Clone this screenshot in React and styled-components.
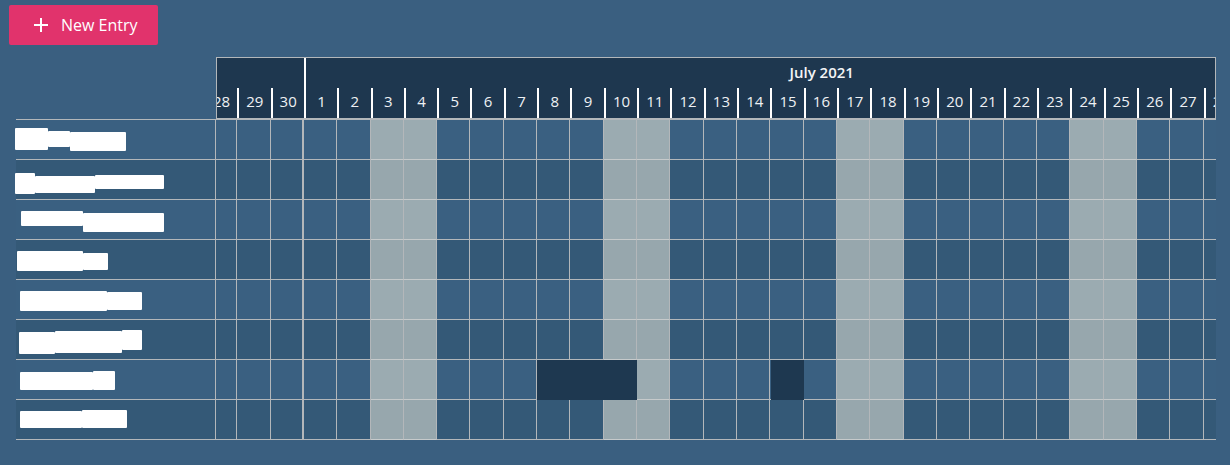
import React, { useLayoutEffect, useRef } from "react";
import styled, { createGlobalStyle } from "styled-components";

const COL = 1000 / 30;
const LINE = "#b3b7ba";
const LINE_LIGHT = "#c6cacb";

const GlobalStyle = createGlobalStyle`
  html, body { margin: 0; padding: 0; background: #3a5f80; }
  body { font-family: "Open Sans", "Noto Sans", sans-serif; color: #fff; }
`;

const Page = styled.div`
  width: 1230px;
  height: 465px;
  background: #3a5f80;
  padding: 5px 0 0 9px;
  box-sizing: border-box;
  overflow: hidden;
`;

const NewButton = styled.button`
  display: flex;
  align-items: center;
  gap: 12px;
  width: 149px;
  height: 40px;
  padding: 0 0 0 24px;
  box-sizing: border-box;
  border: none;
  border-radius: 2px;
  background: #e1336c;
  color: #fff;
  font-family: "Open Sans", sans-serif;
  font-size: 16px;
  cursor: pointer;
`;

const Timeline = styled.div`
  display: flex;
  margin: 12px 0 0 7px;
`;

const LabelCol = styled.div`
  width: 200px;
  display: flex;
  flex-direction: column;
`;

const LabelHeader = styled.div`
  height: 63px;
  box-sizing: border-box;
  border-bottom: 1px solid ${LINE};
`;

const LabelRow = styled.div`
  height: 40px;
  box-sizing: border-box;
  border-bottom: 1px solid ${LINE};
  border-right: 1px solid ${LINE};
  background: ${(p) => (p.$alt ? "#345977" : "#3a6081")};
  display: flex;
  align-items: flex-start;
  padding-top: ${(p) => p.$top}px;
  padding-left: ${(p) => p.$left}px;
`;

const Blob = styled.span`
  display: block;
  background: #fff;
  width: ${(p) => p.$w}px;
  height: ${(p) => p.$h}px;
  margin-top: ${(p) => p.$t}px;
  margin-left: ${(p) => p.$ml || 0}px;
  border-radius: 1px;
`;

const GridCol = styled.div`
  width: 1000px;
  display: flex;
  flex-direction: column;
`;

const HeaderFrame = styled.div`
  width: 1000px;
  height: 63px;
  box-sizing: border-box;
  background: #1e374f;
  border-top: 1px solid ${LINE};
  border-left: 1px solid ${LINE};
  border-right: 1px solid ${LINE};
  border-bottom: 2px solid ${LINE};
`;

const Viewport = styled.div`
  overflow: hidden;
  width: 100%;
`;

const Track = styled.div`
  display: flex;
  flex-direction: column;
  width: max-content;
`;

const MonthRow = styled.div`
  display: flex;
  height: 30px;
`;

const MonthCell = styled.div`
  flex: 0 0 auto;
  box-sizing: border-box;
  border-left: 2px solid #fff;
  display: flex;
  align-items: center;
  justify-content: center;
  padding-bottom: 2px;
  font-size: 15px;
  font-weight: 600;
  color: #f2f4f6;
`;

const DayRow = styled.div`
  display: flex;
  height: 30px;
`;

const DayCell = styled.div`
  flex: 0 0 ${COL}px;
  width: ${COL}px;
  box-sizing: border-box;
  border-left: 2px solid #fff;
  display: flex;
  align-items: center;
  justify-content: center;
  padding-bottom: 5px;
  font-size: 15px;
  color: #eef1f4;
`;

const Row = styled.div`
  position: relative;
  display: flex;
  height: 40px;
  background: ${(p) => (p.$alt ? "#345977" : "#3a6081")};
`;

const Cell = styled.div`
  flex: 0 0 ${COL}px;
  width: ${COL}px;
  box-sizing: border-box;
  border-right: ${(p) => (p.$monthEnd ? 2 : 1)}px solid ${LINE};
  border-bottom: 1px solid ${(p) => (p.$weekend ? LINE_LIGHT : LINE)};
  background: ${(p) =>
    p.$weekend ? (p.$alt ? "#97a7ad" : "#9babb1") : "transparent"};
`;

const EventBar = styled.div`
  position: absolute;
  top: 0;
  height: 40px;
  background: #1e3850;
  z-index: 1;
`;

const PlusIcon = () => (
  <svg width="16" height="16" viewBox="0 0 16 16" aria-hidden="true">
    <path d="M8 1v14M1 8h14" stroke="#fff" strokeWidth="2" fill="none" />
  </svg>
);

const days = [];
for (let d = 1; d <= 30; d++) days.push({ m: 5, d });
for (let d = 1; d <= 31; d++) days.push({ m: 6, d });
days.forEach((x) => {
  const dow = new Date(2021, x.m, x.d).getDay();
  x.weekend = dow === 0 || dow === 6;
  x.monthEnd = x.m === 5 && x.d === 30;
});

const months = [
  { label: "June 2021", count: 30 },
  { label: "July 2021", count: 31 },
];

const idxOf = (m, d) => days.findIndex((x) => x.m === m && x.d === d);

const labels = [
  { top: 8, left: 0, parts: [[-1, 33, 22, 0], [0, 22, 16, 3], [0, 56, 19, 4]] },
  { top: 13, left: 0, parts: [[-1, 20, 21, 0], [0, 60, 17, 3], [0, 69, 14, 2]] },
  { top: 11, left: 5, parts: [[0, 62, 15, 0], [0, 81, 19, 2]] },
  { top: 11, left: 1, parts: [[0, 66, 20, 0], [0, 25, 17, 2]] },
  { top: 11, left: 4, parts: [[0, 87, 20, 0], [0, 35, 18, 1]] },
  { top: 10, left: 3, parts: [[0, 36, 22, 2], [0, 67, 22, 1], [0, 20, 20, 0]] },
  { top: 11, left: 4, parts: [[0, 73, 18, 1], [0, 22, 19, 0]] },
  { top: 10, left: 4, parts: [[0, 62, 17, 1], [0, 45, 18, 0]] },
];

const events = {
  6: [
    { start: idxOf(6, 8), len: 3 },
    { start: idxOf(6, 15), len: 1 },
  ],
};

export default function App() {
  const headRef = useRef(null);
  const bodyRef = useRef(null);

  useLayoutEffect(() => {
    const base = 27 * COL + 12;
    if (bodyRef.current) bodyRef.current.scrollLeft = base;
    if (headRef.current) headRef.current.scrollLeft = base + 1;
  }, []);

  return (
    <>
      <GlobalStyle />
      <Page>
        <NewButton>
          <PlusIcon />
          New Entry
        </NewButton>
        <Timeline>
          <LabelCol>
            <LabelHeader />
            {labels.map((l, i) => (
              <LabelRow key={i} $alt={i % 2 === 1} $top={l.top} $left={l.left}>
                {l.parts.map(([ml, w, h, t], j) => (
                  <Blob key={j} $ml={ml} $w={w} $h={h} $t={t} />
                ))}
              </LabelRow>
            ))}
          </LabelCol>
          <GridCol>
            <HeaderFrame>
              <Viewport ref={headRef}>
                <Track>
                  <MonthRow>
                    {months.map((m) => (
                      <MonthCell key={m.label} style={{ width: m.count * COL }}>
                        {m.label === "July 2021" ? m.label : ""}
                      </MonthCell>
                    ))}
                  </MonthRow>
                  <DayRow>
                    {days.map((x, i) => (
                      <DayCell key={i}>{x.d}</DayCell>
                    ))}
                  </DayRow>
                </Track>
              </Viewport>
            </HeaderFrame>
            <Viewport ref={bodyRef}>
              <Track>
                {labels.map((_, r) => (
                  <Row key={r} $alt={r % 2 === 1}>
                    {days.map((x, i) => (
                      <Cell
                        key={i}
                        $weekend={x.weekend}
                        $monthEnd={x.monthEnd}
                        $alt={r % 2 === 1}
                      />
                    ))}
                    {(events[r] || []).map((e, k) => (
                      <EventBar
                        key={k}
                        style={{ left: e.start * COL, width: e.len * COL }}
                      />
                    ))}
                  </Row>
                ))}
              </Track>
            </Viewport>
          </GridCol>
        </Timeline>
      </Page>
    </>
  );
}
